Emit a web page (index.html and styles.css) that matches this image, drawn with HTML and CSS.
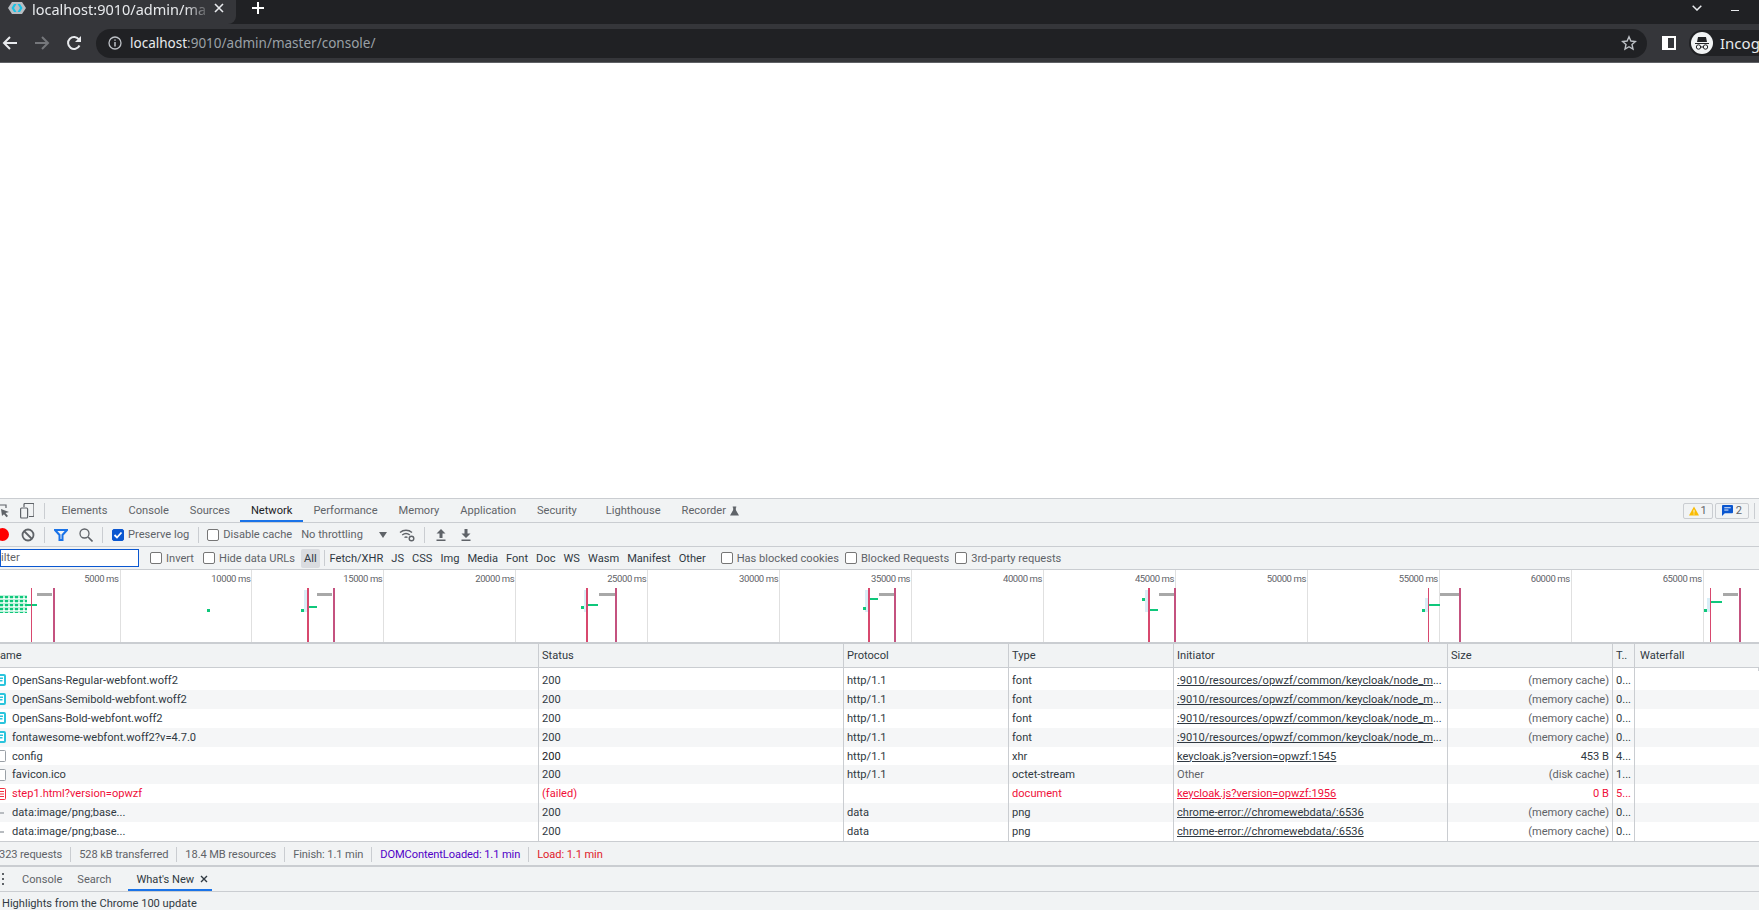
FILE: index.html
```html
<!DOCTYPE html>
<html lang="en">
<head>
<meta charset="utf-8">
<title>localhost:9010/admin/master/console/</title>
<link rel="stylesheet" href="styles.css">
</head>
<body>
<header class="chrome">
  <div class="tabstrip">
    <div class="tab">
      <svg class="favicon" width="18" height="14" viewBox="0 0 18 14"><path d="M4 1h10l4 6-4 6H4L0 7z" fill="#b9bdc2"/><path d="M6 3 3.500 7 6 11h2.500L6 7l2.500-4zM12 3l2.500 4-2.500 4H9.500L12 7 9.500 3z" fill="#19c3e6"/></svg>
      <span class="tab-title">localhost:9010/admin/ma</span>
      <svg class="tab-close" width="10" height="10" viewBox="0 0 10 10"><path d="M1 1l8 8M9 1 1 9" stroke="#e8eaed" stroke-width="1.600"/></svg>
    </div>
    <svg class="new-tab" width="12" height="12" viewBox="0 0 12 12"><path d="M6 0v12M0 6h12" stroke="#fff" stroke-width="2"/></svg>
    <div class="win-controls">
      <svg width="10" height="6" viewBox="0 0 10 6"><path d="M.7.700 5 5l4.300-4.300" fill="none" stroke="#e8eaed" stroke-width="1.500"/></svg>
      <span class="minimize"></span>
    </div>
  </div>
  <div class="toolbar">
    <svg class="nav" width="16" height="16" viewBox="0 0 16 16"><path d="M15 8H2M8 2 2 8l6 6" fill="none" stroke="#e8eaed" stroke-width="2"/></svg>
    <svg class="nav" width="16" height="16" viewBox="0 0 16 16"><path d="M1 8h13M8 2l6 6-6 6" fill="none" stroke="#75777b" stroke-width="2"/></svg>
    <svg class="nav" width="16" height="16" viewBox="0 0 16 16"><path d="M13.500 10.500A6 6 0 1 1 13 4.500" fill="none" stroke="#e8eaed" stroke-width="2"/><path d="M15 1v6H9z" fill="#e8eaed"/></svg>
    <div class="omnibox">
      <svg class="info" width="14" height="14" viewBox="0 0 14 14"><circle cx="7" cy="7" r="6" fill="none" stroke="#bdc1c6" stroke-width="1.300"/><path d="M7 6v4.500M7 3.400v1.400" stroke="#bdc1c6" stroke-width="1.500"/></svg>
      <span class="url"><span class="url-host">localhost</span>:9010/admin/master/console/</span>
      <svg class="star" width="16" height="16" viewBox="0 0 16 16"><path d="m8 1.800 1.900 4.200 4.500.5-3.400 3 1 4.500L8 11.700 4 14l1-4.500-3.400-3 4.500-.5z" fill="none" stroke="#bdc1c6" stroke-width="1.400"/></svg>
    </div>
    <svg class="panel-icon" width="14" height="14" viewBox="0 0 14 14"><rect width="14" height="14" fill="#fff"/><rect x="6" y="2" width="6" height="10" fill="#35363a"/></svg>
    <div class="profile">
      <svg width="22" height="22" viewBox="0 0 22 22"><circle cx="11" cy="11" r="11" fill="#f1f3f4"/><path d="M4 11h14v1H4zM7 5h8l1 5H6z" fill="#202124"/><circle cx="7.500" cy="15" r="2.200" fill="none" stroke="#202124"/><circle cx="14.500" cy="15" r="2.200" fill="none" stroke="#202124"/><path d="M9.700 15h2.600" stroke="#202124"/></svg>
      <span class="profile-name">Incog</span>
    </div>
  </div>
</header>

<main class="page"></main>

<section class="devtools">
  <nav class="dt-tabs">
    <svg class="dt-icon cut" width="14" height="14" viewBox="0 0 14 14"><path d="M1 1h10v3M1 1v10h3" fill="none" stroke="#5f6368" stroke-width="1.200"/><path d="m6 5 8 3-3.500 1 2.500 3-1.500 1.200-2.500-3L7 12z" fill="#5f6368"/></svg>
    <svg class="dt-icon device" width="14" height="16" viewBox="0 0 14 16"><path d="M4 4V1.500a1 1 0 0 1 1-1h8a1 1 0 0 1 1 1v11a1 1 0 0 1-1 1h-4" fill="none" stroke="#5f6368" stroke-width="1.200"/><rect x=".6" y="5" width="7" height="10" rx="1" fill="none" stroke="#5f6368" stroke-width="1.200"/></svg>
    <span class="vsep"></span>
    <span class="dt-tab">Elements</span>
    <span class="dt-tab">Console</span>
    <span class="dt-tab">Sources</span>
    <span class="dt-tab active">Network</span>
    <span class="dt-tab">Performance</span>
    <span class="dt-tab">Memory</span>
    <span class="dt-tab">Application</span>
    <span class="dt-tab">Security</span>
    <span class="dt-tab lighthouse">Lighthouse</span>
    <span class="dt-tab">Recorder
      <svg width="9" height="10" viewBox="0 0 10 10"><path d="M3 0h4v1H6.500v3L10 10H0l3.500-6V1H3z" fill="#5f6368"/></svg>
    </span>
    <span class="badges">
      <span class="badge warn"><svg width="10" height="10" viewBox="0 0 12 11"><path d="M6 0l6 11H0z" fill="#f9bc04"/><path d="M6 4v3.500M6 8.500v1.200" stroke="#fff" stroke-width="1.100"/></svg>1</span>
      <span class="badge"><svg width="11" height="11" viewBox="0 0 12 12"><path d="M1 0h10a1 1 0 0 1 1 1v7a1 1 0 0 1-1 1H3l-3 3V1a1 1 0 0 1 1-1z" fill="#0b57d0"/><path d="M2.500 3h7M2.500 5.500h4.500" stroke="#fff"/></svg>2</span>
      <span class="vsep"></span>
    </span>
  </nav>

  <div class="net-toolbar">
    <span class="record"></span>
    <svg class="tool ban" width="14" height="14" viewBox="0 0 14 14"><circle cx="7" cy="7" r="5.500" fill="none" stroke="#5f6368" stroke-width="1.800"/><path d="m3 3 8 8" stroke="#5f6368" stroke-width="1.800"/></svg>
    <span class="vsep"></span>
    <svg class="tool" width="14" height="12" viewBox="0 0 14 12"><path d="M1 1h12L8.500 6v5h-3V6z" fill="none" stroke="#1a73e8" stroke-width="2"/></svg>
    <svg class="tool search" width="14" height="14" viewBox="0 0 14 14"><circle cx="5.500" cy="5.500" r="4.500" fill="none" stroke="#5f6368" stroke-width="1.300"/><path d="m9 9 4.500 4.500" stroke="#5f6368" stroke-width="1.600"/></svg>
    <span class="vsep"></span>
    <label class="check"><span class="box checked"><svg width="12" height="12" viewBox="0 0 12 12"><path d="m2.500 6 2.500 2.500 4.500-5" fill="none" stroke="#fff" stroke-width="1.800"/></svg></span>Preserve log</label>
    <span class="vsep"></span>
    <label class="check cache"><span class="box"></span>Disable cache</label>
    <span class="throttle">No throttling</span>
    <span class="caret"></span>
    <svg class="wifi" width="16" height="14" viewBox="0 0 16 14"><path d="M1 4.500a9 9 0 0 1 12 0M3.200 7a6 6 0 0 1 7.600 0M5.500 9.500a3 3 0 0 1 3 0" fill="none" stroke="#5f6368" stroke-width="1.400"/><circle cx="12.500" cy="10.500" r="2.300" fill="none" stroke="#5f6368" stroke-width="1.400"/></svg>
    <span class="vsep"></span>
    <svg class="tool arrow-up" width="10" height="12" viewBox="0 0 10 12"><path d="M5 0 9.500 4.500H6.500V9h-3V4.500H.5zM.5 10.500h9V12h-9z" fill="#5f6368"/></svg>
    <svg class="tool arrow-down" width="10" height="12" viewBox="0 0 10 12"><path d="M5 9 9.500 4.500H6.500V0h-3v4.500H.5zM.5 10.500h9V12h-9z" fill="#5f6368"/></svg>
  </div>

  <div class="filter-bar">
    <span class="filter-input">ilter</span>
    <label class="check"><span class="box"></span>Invert</label>
    <label class="check"><span class="box"></span>Hide data URLs</label>
    <span class="type all">All</span>
    <span class="vsep"></span>
    <span class="type">Fetch/XHR</span>
    <span class="type">JS</span>
    <span class="type">CSS</span>
    <span class="type">Img</span>
    <span class="type">Media</span>
    <span class="type">Font</span>
    <span class="type">Doc</span>
    <span class="type">WS</span>
    <span class="type">Wasm</span>
    <span class="type">Manifest</span>
    <span class="type">Other</span>
    <label class="check wide"><span class="box"></span>Has blocked cookies</label>
    <label class="check wide"><span class="box"></span>Blocked Requests</label>
    <label class="check wide"><span class="box"></span>3rd-party requests</label>
  </div>

  <div class="overview">
    <div class="tick first">5000 ms</div>
    <div class="tick">10000 ms</div>
    <div class="tick">15000 ms</div>
    <div class="tick">20000 ms</div>
    <div class="tick">25000 ms</div>
    <div class="tick">30000 ms</div>
    <div class="tick">35000 ms</div>
    <div class="tick">40000 ms</div>
    <div class="tick">45000 ms</div>
    <div class="tick">50000 ms</div>
    <div class="tick">55000 ms</div>
    <div class="tick">60000 ms</div>
    <div class="tick">65000 ms</div>
    <svg class="timeline" width="1759" height="72" viewBox="0 570 1759 72">
      <defs>
        <pattern id="mosaic" width="5" height="4" patternUnits="userSpaceOnUse">
          <rect width="5" height="4" fill="#bff2dc"/>
          <rect width="3" height="2" fill="#0fc77b"/>
          <rect x="3" y="2" width="2" height="1" fill="#ffffff"/>
        </pattern>
      </defs>
      <g fill="#d9eef7">
        <rect x="304" y="590" width="4" height="22"/><rect x="865" y="590" width="3" height="22"/><rect x="1145" y="590" width="3" height="22"/><rect x="1425" y="598" width="3" height="14"/><rect x="1707" y="598" width="3" height="14"/><rect x="584" y="590" width="2" height="22"/>
      </g>
      <rect x="0" y="595" width="27" height="18" fill="url(#mosaic)"/>
      <g fill="#0fc77b">
        <rect x="27" y="604" width="10" height="2"/>
        <rect x="207" y="609" width="3" height="3"/><rect x="301" y="609" width="3" height="3"/><rect x="308" y="606" width="9" height="2"/>
        <rect x="581" y="606" width="3" height="3"/><rect x="587" y="604" width="11" height="2"/>
        <rect x="863" y="607" width="3" height="3"/><rect x="869" y="598" width="9" height="2"/>
        <rect x="1142" y="598" width="3" height="3"/><rect x="1148" y="609" width="10" height="2"/>
        <rect x="1422" y="609" width="3" height="3"/><rect x="1428" y="604" width="12" height="2"/>
        <rect x="1704" y="609" width="3" height="3"/><rect x="1710" y="601" width="12" height="2"/>
      </g>
      <g fill="#a8a8a8">
        <rect x="37" y="593" width="15" height="3"/><rect x="317" y="593" width="15" height="3"/><rect x="599" y="593" width="16" height="3"/><rect x="879" y="593" width="15" height="3"/><rect x="1159" y="593" width="15" height="3"/><rect x="1440" y="593" width="19" height="3"/><rect x="1723" y="593" width="15" height="3"/>
      </g>
      <g fill="#d8486e">
        <rect x="31" y="588" width="1" height="54"/><rect x="307" y="588" width="2" height="54"/><rect x="586" y="588" width="2" height="54"/><rect x="868" y="588" width="2" height="54"/><rect x="1148" y="588" width="2" height="54"/><rect x="1428" y="588" width="1" height="54"/><rect x="1710" y="588" width="1" height="54"/>
      </g>
      <g fill="#c4527f">
        <rect x="53" y="588" width="2" height="54"/><rect x="333" y="588" width="2" height="54"/><rect x="615" y="588" width="2" height="54"/><rect x="894" y="588" width="2" height="54"/><rect x="1174" y="588" width="2" height="54"/><rect x="1459" y="588" width="2" height="54"/><rect x="1739" y="588" width="2" height="54"/>
      </g>
    </svg>
  </div>

  <div class="net-table">
    <div class="row head">
      <span class="c-name"><span class="name-label">Name</span></span><span class="c-status">Status</span><span class="c-proto">Protocol</span><span class="c-type">Type</span><span class="c-init">Initiator</span><span class="c-size">Size</span><span class="c-time">T..</span><span class="c-fall">Waterfall</span>
    </div>
    <div class="gap"><span class="c-name"></span><span class="c-status"></span><span class="c-proto"></span><span class="c-type"></span><span class="c-init"></span><span class="c-size"></span><span class="c-time"></span><span class="c-fall"></span></div>

    <div class="row">
      <span class="c-name"><svg class="file" width="12" height="12" viewBox="0 0 12 12"><rect x="1" y="1" width="10" height="10" rx="1" fill="#fff" stroke="#2bc4dc" stroke-width="2"/><path d="M3.500 3.500h5.500v1.500H5.500v1h3V7.500h-3V9.500h-2z" fill="#2bc4dc"/></svg>OpenSans-Regular-webfont.woff2</span><span class="c-status">200</span><span class="c-proto">http/1.1</span><span class="c-type">font</span><span class="c-init"><a>:9010/resources/opwzf/common/keycloak/node_m</a>...</span><span class="c-size muted">(memory cache)</span><span class="c-time">0...</span><span class="c-fall"></span>
    </div>
    <div class="row alt">
      <span class="c-name"><svg class="file" width="12" height="12" viewBox="0 0 12 12"><rect x="1" y="1" width="10" height="10" rx="1" fill="#fff" stroke="#2bc4dc" stroke-width="2"/><path d="M3.500 3.500h5.500v1.500H5.500v1h3V7.500h-3V9.500h-2z" fill="#2bc4dc"/></svg>OpenSans-Semibold-webfont.woff2</span><span class="c-status">200</span><span class="c-proto">http/1.1</span><span class="c-type">font</span><span class="c-init"><a>:9010/resources/opwzf/common/keycloak/node_m</a>...</span><span class="c-size muted">(memory cache)</span><span class="c-time">0...</span><span class="c-fall"></span>
    </div>
    <div class="row">
      <span class="c-name"><svg class="file" width="12" height="12" viewBox="0 0 12 12"><rect x="1" y="1" width="10" height="10" rx="1" fill="#fff" stroke="#2bc4dc" stroke-width="2"/><path d="M3.500 3.500h5.500v1.500H5.500v1h3V7.500h-3V9.500h-2z" fill="#2bc4dc"/></svg>OpenSans-Bold-webfont.woff2</span><span class="c-status">200</span><span class="c-proto">http/1.1</span><span class="c-type">font</span><span class="c-init"><a>:9010/resources/opwzf/common/keycloak/node_m</a>...</span><span class="c-size muted">(memory cache)</span><span class="c-time">0...</span><span class="c-fall"></span>
    </div>
    <div class="row alt">
      <span class="c-name"><svg class="file" width="12" height="12" viewBox="0 0 12 12"><rect x="1" y="1" width="10" height="10" rx="1" fill="#fff" stroke="#2bc4dc" stroke-width="2"/><path d="M3.500 3.500h5.500v1.500H5.500v1h3V7.500h-3V9.500h-2z" fill="#2bc4dc"/></svg>fontawesome-webfont.woff2?v=4.7.0</span><span class="c-status">200</span><span class="c-proto">http/1.1</span><span class="c-type">font</span><span class="c-init"><a>:9010/resources/opwzf/common/keycloak/node_m</a>...</span><span class="c-size muted">(memory cache)</span><span class="c-time">0...</span><span class="c-fall"></span>
    </div>
    <div class="row">
      <span class="c-name"><svg class="file" width="12" height="12" viewBox="0 0 12 12"><rect x="0.500" y="0.500" width="11" height="11" rx="1" fill="#fff" stroke="#9aa0a6"/></svg>config</span><span class="c-status strong">200</span><span class="c-proto">http/1.1</span><span class="c-type">xhr</span><span class="c-init"><a>keycloak.js?version=opwzf:1545</a></span><span class="c-size">453 B</span><span class="c-time">4...</span><span class="c-fall"></span>
    </div>
    <div class="row alt">
      <span class="c-name"><svg class="file" width="12" height="12" viewBox="0 0 12 12"><rect x="0.500" y="0.500" width="11" height="11" rx="1" fill="#fff" stroke="#9aa0a6"/></svg>favicon.ico</span><span class="c-status">200</span><span class="c-proto">http/1.1</span><span class="c-type">octet-stream</span><span class="c-init muted">Other</span><span class="c-size muted">(disk cache)</span><span class="c-time">1...</span><span class="c-fall"></span>
    </div>
    <div class="row failed">
      <span class="c-name"><svg class="file" width="12" height="12" viewBox="0 0 12 12"><rect x="0.500" y="0.500" width="11" height="11" rx="1" fill="none" stroke="#f0303f"/><path d="M2 3.500h8M2 6h8M2 8.500h8" stroke="#f0303f" stroke-width="1.200"/></svg>step1.html?version=opwzf</span><span class="c-status">(failed)</span><span class="c-proto"></span><span class="c-type">document</span><span class="c-init"><a>keycloak.js?version=opwzf:1956</a></span><span class="c-size">0 B</span><span class="c-time">5...</span><span class="c-fall"></span>
    </div>
    <div class="row alt">
      <span class="c-name"><svg class="file" width="12" height="12" viewBox="0 0 12 12"><path d="M6 6h4" stroke="#b8bcc0" stroke-width="2"/></svg>data:image/png;base...</span><span class="c-status">200</span><span class="c-proto">data</span><span class="c-type">png</span><span class="c-init"><a>chrome-error://chromewebdata/:6536</a></span><span class="c-size muted">(memory cache)</span><span class="c-time">0...</span><span class="c-fall"></span>
    </div>
    <div class="row">
      <span class="c-name"><svg class="file" width="12" height="12" viewBox="0 0 12 12"><path d="M6 6h4" stroke="#b8bcc0" stroke-width="2"/></svg>data:image/png;base...</span><span class="c-status">200</span><span class="c-proto">data</span><span class="c-type">png</span><span class="c-init"><a>chrome-error://chromewebdata/:6536</a></span><span class="c-size muted">(memory cache)</span><span class="c-time">0...</span><span class="c-fall"></span>
    </div>
  </div>

  <div class="summary">
    <span>323 requests</span>
    <span>528 kB transferred</span>
    <span>18.4 MB resources</span>
    <span>Finish: 1.1 min</span>
    <span class="dcl">DOMContentLoaded: 1.1 min</span>
    <span class="load">Load: 1.1 min</span>
  </div>

  <div class="drawer-tabs">
    <svg class="kebab" width="4" height="14" viewBox="0 0 4 14"><path d="M2 1v2M2 6v2M2 11v2" stroke="#5f6368" stroke-width="2"/></svg>
    <span class="dr-tab">Console</span>
    <span class="dr-tab">Search</span>
    <span class="dr-tab active">What's New <svg width="8" height="8" viewBox="0 0 8 8"><path d="m1 1 6 6M7 1 1 7" stroke="#303942" stroke-width="1.400"/></svg></span>
  </div>
  <div class="drawer-body">Highlights from the Chrome 100 update</div>
</section>
</body>
</html>
```
FILE: styles.css
```css
* { box-sizing: border-box; }
html, body { margin: 0; height: 100%; overflow: hidden; }
body {
  width: 1759px;
  height: 910px;
  display: flex;
  flex-direction: column;
  background: #fff;
  font-family: Roboto, "Noto Sans", sans-serif;
}
svg { flex: none; display: block; }

/* browser chrome */
.chrome { flex: none; height: 63px; background: #35363a; border-bottom: 1px solid #5f6165; font-family: "Noto Sans", sans-serif; }
.tabstrip { height: 24px; background: #202124; display: flex; align-items: center; position: relative; }
.tab { width: 236px; height: 24px; background: #35363a; border-radius: 0 0 8px 0; display: flex; align-items: center; padding-left: 8px; }
.tab-title { margin-left: 6px; width: 180px; overflow: hidden; white-space: nowrap; color: #e8eaed; font-size: 14.500px; line-height: 20px; margin-top: -7px; -webkit-mask-image: linear-gradient(90deg, #000 85%, transparent); mask-image: linear-gradient(90deg, #000 85%, transparent); }
.favicon { margin-top: -8px; }
.tab-close { margin-left: 2px; margin-top: -8px; }
.new-tab { margin-left: 16px; margin-top: -8px; }
.win-controls { margin-left: auto; display: flex; align-items: center; gap: 29px; padding-right: 20px; margin-top: -8px; }
.minimize { width: 8px; height: 1px; background: #e8eaed; margin-top: 5px; }
.toolbar { height: 38px; display: flex; align-items: center; }
.nav { margin-left: 2px; margin-right: 8px; }
.nav:nth-child(2) { margin-left: 8px; }
.nav:nth-child(3) { margin-left: 8px; margin-right: 14px; }
.omnibox { width: 1551px; height: 29px; background: #202124; border-radius: 15px; display: flex; align-items: center; padding: 0 10px 0 12px; }
.url { margin-left: 8px; color: #9aa0a6; font-size: 13.500px; white-space: nowrap; }
.url-host { color: #e8eaed; }
.star { margin-left: auto; }
.panel-icon { margin-left: 15px; }
.profile { margin-left: 13px; display: flex; align-items: center; gap: 7px; height: 26px; background: #202124; border-radius: 13px 0 0 13px; padding-left: 2px; flex: 1; overflow: hidden; }
.profile-name { color: #e8eaed; font-size: 15px; white-space: nowrap; }

.page { flex: 1; background: #fff; }

/* devtools */
.devtools { flex: none; height: 412px; background: #f1f3f4; color: #303942; font-size: 11.100px; display: flex; flex-direction: column; border-top: 1px solid #cacdd1; }
.vsep { width: 1px; height: 16px; background: #cacdd1; flex: none; }

.dt-tabs { height: 24px; display: flex; align-items: center; border-bottom: 1px solid #cacdd1; flex: none; }
.cut { margin-left: -5px; }
.device { margin-left: 11px; margin-right: 10px; }
.dt-tab { color: #5f6368; padding: 0 10.500px; height: 23px; display: flex; align-items: center; gap: 4px; white-space: nowrap; }
.vsep + .dt-tab { margin-left: 6px; }
.dt-tab.active { color: #202124; border-bottom: 2px solid #1a73e8; padding-top: 2px; }
.dt-tab.lighthouse { margin-left: 8px; }
.badges { margin-left: auto; display: flex; align-items: center; gap: 2px; padding-right: 4px; }
.badge { display: flex; align-items: center; gap: 3px; height: 16px; padding: 0 6px; border: 1px solid #cacdd1; border-radius: 2px; color: #5f6368; }
.badge.warn { padding: 0 5px; gap: 2px; }
.badges .vsep { margin-left: 3px; }

.net-toolbar { height: 24px; display: flex; align-items: center; border-bottom: 1px solid #cacdd1; flex: none; color: #5f6368; }
.record { width: 13px; height: 13px; border-radius: 50%; background: #f00; margin-left: -4px; }
.net-toolbar .tool { margin-left: 9px; }
.net-toolbar .tool.ban { margin-left: 12px; }
.net-toolbar .tool.search { margin-left: 11px; }
.net-toolbar .vsep { margin-left: 9px; }
.net-toolbar .tool + .vsep { margin-left: 9px; }
.check { display: flex; align-items: center; gap: 4px; white-space: nowrap; color: #5f6368; }
.net-toolbar .check { margin-left: 9px; }
.net-toolbar .check.cache { margin-left: 8px; }
.box { width: 12px; height: 12px; border: 1px solid #767676; border-radius: 2px; background: #fff; display: block; flex: none; }
.box.checked { background: #0b57d0; border-color: #0b57d0; }
.box svg { margin: -1px; }
.throttle { margin-left: 9px; white-space: nowrap; }
.caret { width: 0; height: 0; border: 4px solid transparent; border-top: 6px solid #5f6368; border-bottom: 0; margin-left: 16px; }
.wifi { margin-left: 12px; }
.net-toolbar .arrow-up { margin-left: 11px; }
.net-toolbar .arrow-down { margin-left: 15px; }

.filter-bar { height: 23px; display: flex; align-items: center; border-bottom: 1px solid #cacdd1; flex: none; color: #303942; }
.filter-input { width: 139px; height: 18px; background: #fff; border: 1px solid #0b57d0; margin-right: 11px; padding-left: 0; line-height: 16px; color: #5f6368; overflow: hidden; }
.filter-bar .check { margin-right: 9px; }
.type { padding: 0 3px; height: 19px; display: flex; align-items: center; margin-right: 2px; white-space: nowrap; }
.type.all { background: #dadce0; border-radius: 2px; margin-left: -3px; margin-right: 4px; }
.filter-bar .vsep { margin-right: 2px; }
.filter-bar .check.wide { margin-left: 10px; margin-right: 0; }
.filter-bar .check.wide + .check.wide { margin-left: 6px; }

.overview { height: 74px; background: #fff; display: flex; position: relative; border-bottom: 2px solid #cacdd1; flex: none; overflow: hidden; }
.tick { flex: none; width: 131.950px; border-right: 1px solid #e0e0e0; text-align: right; padding: 3px 1px 0 0; font-size: 9.500px; letter-spacing: -0.400px; color: #5f6368; white-space: nowrap; }
.tick.first { width: 120.500px; }
.timeline { position: absolute; left: 0; top: 0; }

.net-table { flex: none; background: #fff; }
.row { display: flex; height: 18.900px; align-items: center; background: #fff; white-space: nowrap; }
.row.alt { background: #f5f6f7; }
.row.failed { color: #f0103a; }
.row.failed a { color: #f0103a; }
.row.head { height: 24px; background: #f1f3f4; border-bottom: 1px solid #cacdd1; }
.row span[class^="c-"] { height: 100%; display: flex; align-items: center; padding-left: 3px; border-right: 1px solid #cacdd1; overflow: hidden; }
.gap { display: flex; height: 3px; background: #fff; }
.gap span { border-right: 1px solid #cacdd1; }
.c-name { width: 539px; flex: none; }
.row span.c-name { padding-left: 0; gap: 6px; margin-left: -6px; width: 545px; }
.row.head span.c-name { margin-left: 0; width: 539px; }
.name-label { margin-left: -8px; }
.gap .c-name { width: 539px; }
.c-status { width: 305px; flex: none; }
.c-proto { width: 165px; flex: none; }
.c-type { width: 165px; flex: none; }
.c-init { width: 274px; flex: none; }
.c-size { width: 165px; flex: none; }
.row .c-size { justify-content: flex-end; padding-right: 3px; }
.row.head .c-size { justify-content: flex-start; }
.c-time { width: 22px; flex: none; }
.c-fall { flex: 1; }
.row span.c-fall { border-right: 0; padding-left: 5px; }
.c-init a { text-decoration: underline; color: #303942; }
.muted { color: #5f6368; }
.strong { color: #202124; }

.summary { flex: none; height: 26px; display: flex; align-items: center; padding-top: 2px; border-top: 1px solid #cacdd1; border-bottom: 2px solid #cacdd1; white-space: nowrap; color: #5f6368; letter-spacing: -0.100px; }
.summary span { padding: 0 8px; border-right: 1px solid #cacdd1; line-height: 15px; }
.summary span:first-child { margin-left: -9px; }
.summary span:last-child { border-right: 0; }
.summary .dcl { color: #5000c8; }
.summary .load { color: #e0202a; }

.drawer-tabs { flex: none; height: 25px; display: flex; align-items: center; border-bottom: 1px solid #cacdd1; }
.kebab { margin-left: 1px; margin-right: 11px; }
.dr-tab { height: 24px; display: flex; align-items: center; padding: 1px 6px 0; color: #5f6368; gap: 6px; white-space: nowrap; margin-right: 3px; }
.dr-tab.active { color: #303942; border-bottom: 2px solid #1a73e8; padding: 2px 4px 0 8px; margin-left: 8px; }
.drawer-body { flex: 1; padding: 5px 0 0 2px; color: #303942; white-space: nowrap; overflow: hidden; }
```
